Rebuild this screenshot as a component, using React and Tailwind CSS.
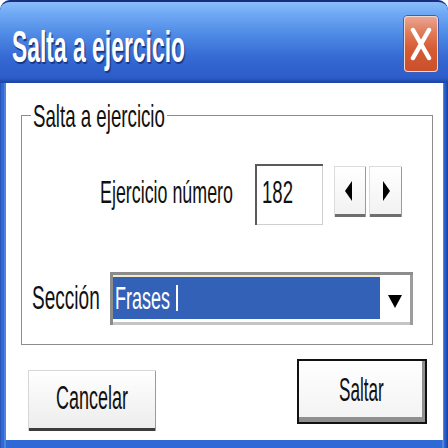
export default function App() {
  return (
    <div className="w-[448px] h-[448px] bg-white overflow-hidden font-['Liberation_Sans',Arial,sans-serif]">
      <div className="flex flex-col w-[448px] h-[448px] rounded-t-[10px] bg-[linear-gradient(to_right,#1d3f9c_0px,#2f69d6_1px,#2f69d6_4px,#6f9ae6_5px,#2f69d6_6px,#2f69d6_442px,#6f9ae6_443px,#2f69d6_444px,#1d3f9c_448px)] overflow-hidden">
        {/* Title bar */}
        <div className="flex items-start h-[83px] shrink-0 border-t-2 border-[#1c2c7e] rounded-t-[10px] pl-[12px] bg-[linear-gradient(to_bottom,#8abdf9_0px,#6ea8f4_12px,#4c88e4_34px,#3569d3_56px,#2c5cca_76px,#1f47a8_80px)]">
          <div className="mt-[23px] w-[171px] h-[44px] flex items-center shrink-0">
            <span className="shrink-0 inline-block origin-left scale-x-[0.52] whitespace-nowrap text-[44px] leading-none font-bold text-white [text-shadow:2px_2px_1px_#183788]">
              Salta a ejercicio
            </span>
          </div>
          <div className="ml-auto mr-[10px] mt-[14px] w-[34px] h-[56px] rounded-[4px] bg-[linear-gradient(to_bottom,#eaa896_0%,#e07a58_30%,#d65a33_60%,#c9502c_100%)] flex items-center justify-center shadow-[inset_0_0_0_1px_#f3d6cc,0_0_0_1px_#3a5fb8]">
            <svg width="22" height="34" viewBox="0 0 22 34">
              <path d="M3 3 L19 31 M19 3 L3 31" stroke="white" strokeWidth="4.5" strokeLinecap="round" fill="none" />
            </svg>
          </div>
        </div>

        {/* Body */}
        <div className="flex-1 ml-[6px] mr-[5px] mb-[8px] bg-white flex flex-col pt-[32px] pl-[15px]">
          {/* Group box */}
          <div className="relative w-[412px] h-[230px] shrink-0 shadow-[inset_0_0_0_1px_#8d8d8d] flex flex-col">
            <div className="absolute left-[10px] -top-[15px] px-[2px] bg-white">
              <div className="w-[132px] h-[32px] flex items-center">
                <span className="shrink-0 inline-block origin-left scale-x-[0.584] whitespace-nowrap text-[32px] leading-none text-[#111]">
                  Salta a ejercicio
                </span>
              </div>
            </div>

            {/* Row 1 */}
            <div className="flex items-start mt-[49px] pl-[79px]">
              <div className="mt-[12px] w-[133px] h-[32px] flex items-center shrink-0">
                <span className="shrink-0 inline-block origin-left scale-x-[0.558] whitespace-nowrap text-[32px] leading-none text-[#111]">
                  Ejercicio número
                </span>
              </div>
              <div className="ml-[22px] w-[68px] h-[61px] shrink-0 bg-white shadow-[inset_2px_2px_0_#5a5a5a,inset_-1px_-1px_0_#cfcfcf] pl-[7px] pt-[12px]">
                <div className="w-[31px] h-[32px] flex items-center">
                  <span className="shrink-0 inline-block origin-left scale-x-[0.58] whitespace-nowrap text-[32px] leading-none text-[#111]">
                    182
                  </span>
                </div>
              </div>
              <div className="ml-[11px] mt-[2px] flex gap-[3px]">
                <div className="w-[32px] h-[51px] bg-[linear-gradient(to_bottom,#ffffff,#f1f1f1)] shadow-[inset_1px_1px_0_#dcdcdc,inset_-1px_0_0_#9a9a9a,inset_0_-3px_0_#6e6e6e] flex items-center justify-center pb-[2px]">
                  <svg width="8" height="20" viewBox="0 0 8 20" className="-ml-[3px]">
                    <polygon points="7,0 7,20 0,10" fill="#000" />
                  </svg>
                </div>
                <div className="w-[33px] h-[51px] bg-[linear-gradient(to_bottom,#ffffff,#f1f1f1)] shadow-[inset_1px_1px_0_#dcdcdc,inset_-1px_0_0_#9a9a9a,inset_0_-3px_0_#6e6e6e] flex items-center justify-center pb-[2px]">
                  <svg width="8" height="20" viewBox="0 0 8 20">
                    <polygon points="1,0 1,20 8,10" fill="#000" />
                  </svg>
                </div>
              </div>
            </div>

            {/* Row 2 */}
            <div className="flex items-start mt-[47px] pl-[11px]">
              <div className="mt-[8px] w-[68px] h-[34px] flex items-center shrink-0">
                <span className="shrink-0 inline-block origin-left scale-x-[0.56] whitespace-nowrap text-[34px] leading-none text-[#111]">
                  Sección
                </span>
              </div>
              <div className="ml-[10px] w-[303px] h-[53px] shrink-0 flex p-[3px] bg-white shadow-[inset_3px_3px_0_#8c8c8c,inset_-3px_0_0_#9c9c9c,inset_0_-3px_0_#c4c4c4]">
                <div className="w-[267px] h-[44px] pt-[2px] bg-[#3461b8] shadow-[inset_0_2px_0_#f4ecc6] flex items-start pl-[2px]">
                  <div className="mt-[6px] w-[55px] h-[31px] flex items-center shrink-0">
                    <span className="shrink-0 inline-block origin-left scale-x-[0.58] whitespace-nowrap text-[31px] leading-none text-white">
                      Frases
                    </span>
                  </div>
                  <div className="ml-[6px] mt-[8px] w-[2px] h-[26px] bg-white" />
                </div>
                <div className="flex-1 flex items-center justify-center pt-[6px] bg-white">
                  <svg width="14" height="13" viewBox="0 0 14 13">
                    <polygon points="0,0 14,0 7,13" fill="#000" />
                  </svg>
                </div>
              </div>
            </div>
          </div>

          {/* Buttons */}
          <div className="flex justify-between items-start mt-[14px] pl-[7px] pr-[16px]">
            <div className="mt-[11px] w-[128px] h-[61px] shrink-0 bg-[linear-gradient(to_bottom,#ffffff,#ececec)] shadow-[inset_1px_1px_0_#d6d6d6,inset_-1px_0_0_#9a9a9a,inset_0_-3px_0_#3c3c3c] flex justify-center pt-[11px]">
              <div className="w-[72px] h-[33px] flex items-center">
                <span className="shrink-0 inline-block origin-left scale-x-[0.545] whitespace-nowrap text-[33px] leading-none text-[#111]">
                  Cancelar
                </span>
              </div>
            </div>
            <div className="w-[130px] h-[65px] shrink-0 bg-[linear-gradient(to_bottom,#ffffff,#f2f2f2)] shadow-[inset_0_0_0_2px_#111,inset_-5px_-7px_0_#8f8f8f] flex justify-center pt-[14px]">
              <div className="w-[45px] h-[33px] flex items-center -ml-[2px]">
                <span className="shrink-0 inline-block origin-left scale-x-[0.52] whitespace-nowrap text-[33px] leading-none text-[#111]">
                  Saltar
                </span>
              </div>
            </div>
          </div>
        </div>
      </div>
    </div>
  );
}
